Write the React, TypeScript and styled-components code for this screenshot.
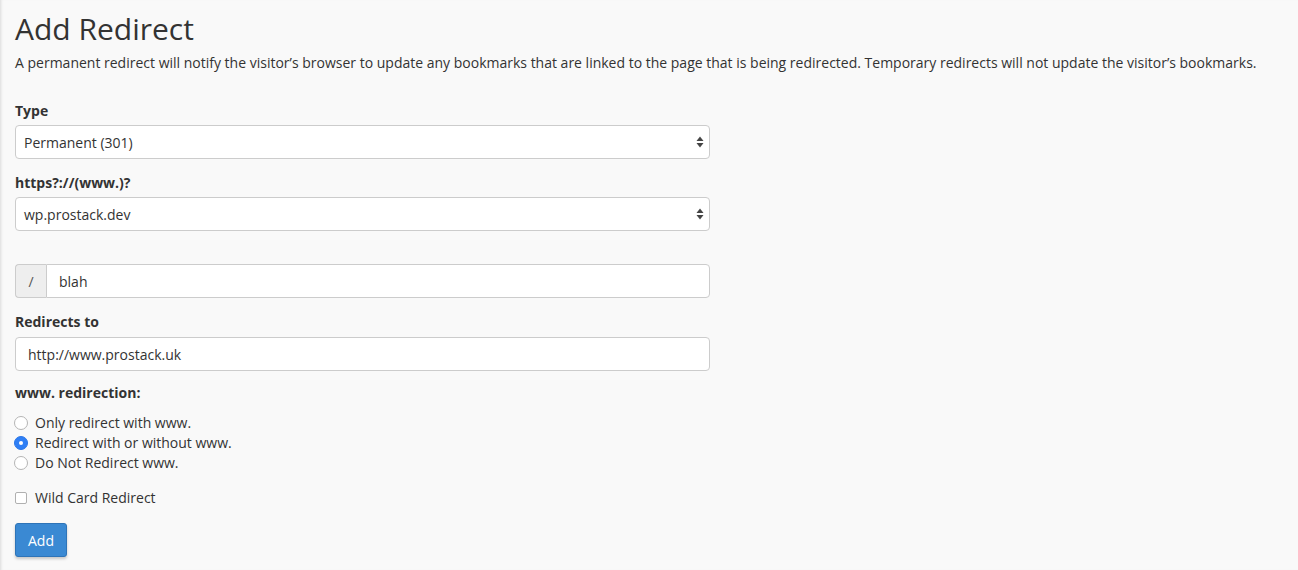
import React from "react";
import styled, { createGlobalStyle } from "styled-components";

const Global = createGlobalStyle`
  html, body { margin: 0; padding: 0; }
  body {
    background: #f9f9f9;
    font-family: "Open Sans", "Liberation Sans", sans-serif;
    color: #333;
  }
  * { box-sizing: border-box; }
`;

const Page = styled.div`
  min-height: 570px;
  padding: 0 0 0 15px;
  box-shadow: inset 3px 0 3px -2px rgba(0, 0, 0, 0.12);
`;

const Title = styled.h1`
  margin: 0;
  padding-top: 11px;
  font-size: 30px;
  font-weight: 400;
  line-height: 36px;
  color: #333;
`;

const Lead = styled.p`
  margin: 6px 0 0;
  font-size: 14px;
  line-height: 20px;
  color: #333;
`;

const Form = styled.form`
  width: 695px;
  display: flex;
  flex-direction: column;
  margin-top: 28px;
`;

const Group = styled.div<{ $mt?: number }>`
  display: flex;
  flex-direction: column;
  margin-top: ${(p) => p.$mt ?? 0}px;
`;

const Label = styled.label<{ $mb?: number }>`
  font-size: 14px;
  font-weight: 700;
  line-height: 20px;
  margin-bottom: ${(p) => p.$mb ?? 4}px;
  color: #333;
`;

const SelectBox = styled.div`
  position: relative;
  height: 34px;
  background: #fff;
  border: 1px solid #ccc;
  border-radius: 4px;
  display: flex;
  align-items: center;
  padding: 0 8px;
  font-size: 14px;
  color: #333;
`;

const Arrows = styled.svg`
  position: absolute;
  right: 5px;
  top: 50%;
  transform: translateY(-50%);
`;

const InputGroup = styled.div`
  display: flex;
  height: 34px;
`;

const Addon = styled.span`
  width: 31px;
  flex: none;
  display: flex;
  align-items: center;
  justify-content: center;
  background: #eee;
  border: 1px solid #ccc;
  border-right: none;
  border-radius: 4px 0 0 4px;
  font-size: 14px;
  color: #555;
`;

const Input = styled.div<{ $attached?: boolean }>`
  flex: ${(p) => (p.$attached ? "1" : "none")};
  height: 34px;
  background: #fff;
  border: 1px solid #ccc;
  border-radius: ${(p) => (p.$attached ? "0 4px 4px 0" : "4px")};
  display: flex;
  align-items: center;
  padding: 0 12px;
  font-size: 14px;
  color: #333;
`;

const Options = styled.div`
  display: flex;
  flex-direction: column;
  margin-top: 5px;
`;

const Option = styled.div`
  display: flex;
  align-items: center;
  height: 20px;
  font-size: 14px;
  color: #333;
`;

const Radio = styled.span<{ $checked?: boolean }>`
  width: 14px;
  height: 14px;
  border-radius: 50%;
  margin: 2px 7px 0 -1px;
  flex: none;
  display: flex;
  align-items: center;
  justify-content: center;
  background: ${(p) => (p.$checked ? "#2f7ff5" : "#fff")};
  border: 1px solid ${(p) => (p.$checked ? "#2a76e8" : "#b5b5b5")};
  &::after {
    content: "";
    display: ${(p) => (p.$checked ? "block" : "none")};
    width: 4px;
    height: 4px;
    border-radius: 50%;
    background: #fff;
  }
`;

const Check = styled.span`
  width: 12px;
  height: 12px;
  border: 1px solid #b0b0b0;
  border-radius: 2px;
  background: #fff;
  margin: 1px 8px 0 0;
  flex: none;
`;

const Button = styled.button`
  margin-top: 16px;
  align-self: flex-start;
  width: 52px;
  height: 34px;
  background: #3a89d3;
  border: 1px solid #2e74b8;
  border-radius: 3px;
  color: #fff;
  font-family: "Open Sans", "Liberation Sans", sans-serif;
  font-size: 14px;
  box-shadow: 0 2px 3px rgba(0, 0, 0, 0.2);
  padding: 0;
`;

const SelectArrows = () => (
  <Arrows width="8" height="12" viewBox="0 0 8 12">
    <path d="M4 0.5 L7.5 5 L0.5 5 Z" fill="#444" />
    <path d="M4 11.5 L7.5 7 L0.5 7 Z" fill="#444" />
  </Arrows>
);

export default function App() {
  return (
    <>
      <Global />
      <Page>
        <Title>Add Redirect</Title>
        <Lead>
          A permanent redirect will notify the visitor’s browser to update any bookmarks that are linked to the page that is being redirected. Temporary redirects will not update the visitor’s bookmarks.
        </Lead>
        <Form>
          <Group>
            <Label>Type</Label>
            <SelectBox>
              Permanent (301)
              <SelectArrows />
            </SelectBox>
          </Group>
          <Group $mt={14}>
            <Label>https?://(www.)?</Label>
            <SelectBox>
              wp.prostack.dev
              <SelectArrows />
            </SelectBox>
          </Group>
          <Group $mt={33}>
            <InputGroup>
              <Addon>/</Addon>
              <Input $attached>blah</Input>
            </InputGroup>
          </Group>
          <Group $mt={14}>
            <Label $mb={5}>Redirects to</Label>
            <Input>http://www.prostack.uk</Input>
          </Group>
          <Group $mt={12}>
            <Label>www. redirection:</Label>
            <Options>
              <Option><Radio />Only redirect with www.</Option>
              <Option><Radio $checked />Redirect with or without www.</Option>
              <Option><Radio />Do Not Redirect www.</Option>
            </Options>
          </Group>
          <Group $mt={15}>
            <Option><Check />Wild Card Redirect</Option>
          </Group>
          <Button type="button">Add</Button>
        </Form>
      </Page>
    </>
  );
}
